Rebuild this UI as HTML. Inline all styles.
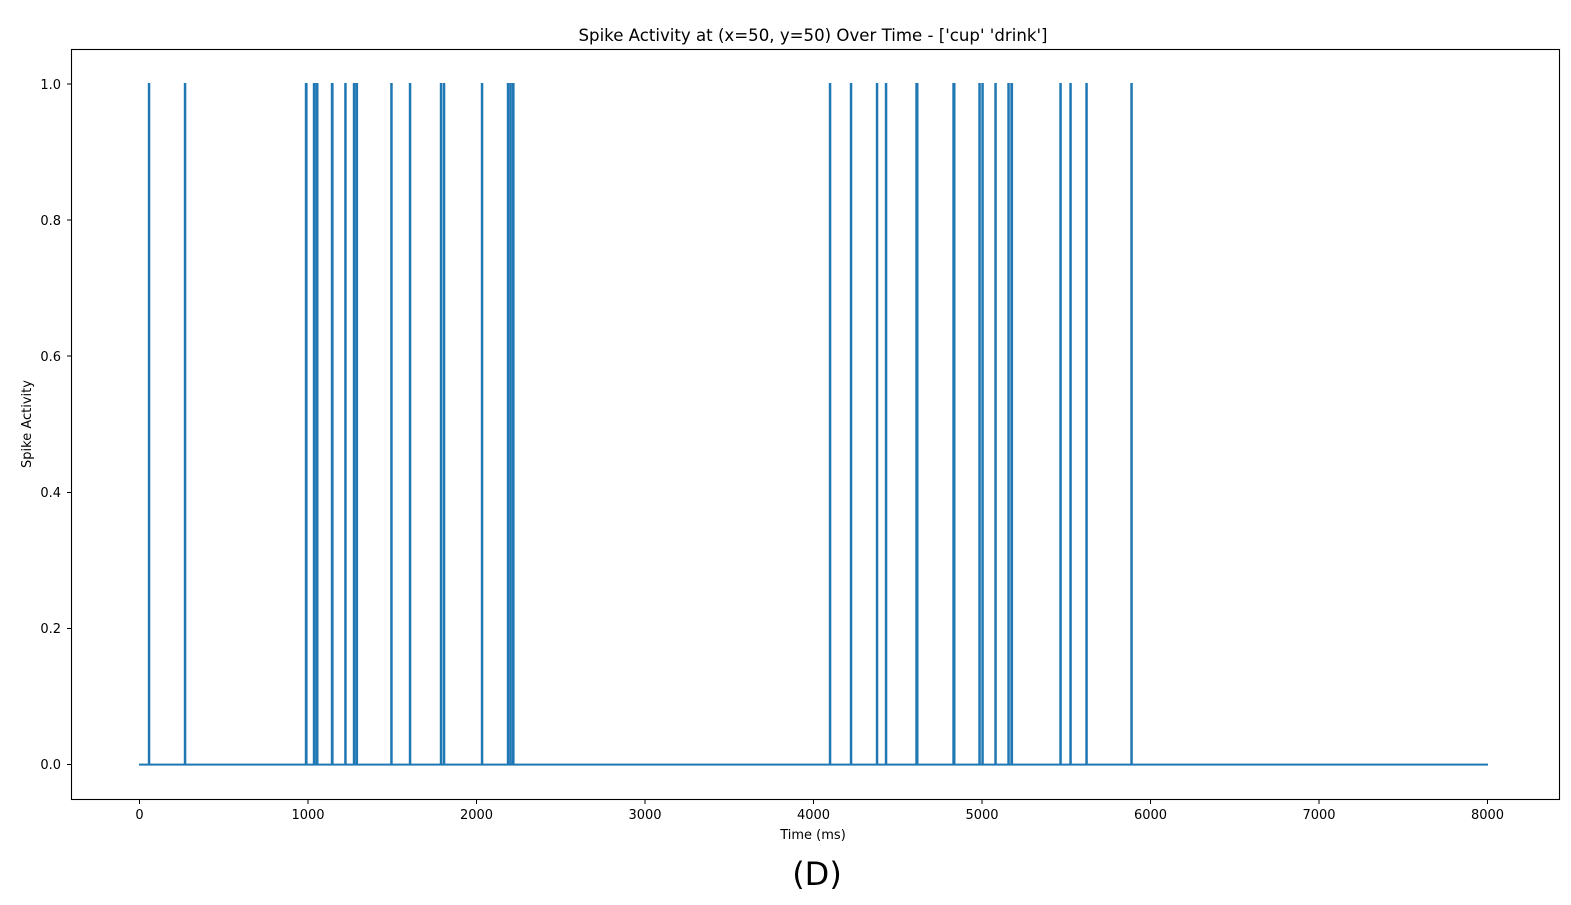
<!DOCTYPE html><html><head><meta charset="utf-8"><style>
html,body{margin:0;padding:0;background:#fff;width:1571px;height:905px;overflow:hidden}
svg text{font-family:"DejaVu Sans","Liberation Sans",sans-serif;fill:#000}
</style></head><body>
<svg width="1571" height="905" xmlns="http://www.w3.org/2000/svg">
<text x="813" y="41" font-size="16.6" text-anchor="middle">Spike Activity at (x=50, y=50) Over Time - ['cup' 'drink']</text>
<g fill="#1f77b4">
<rect x="139" y="763.6" width="1349" height="2"/>
<rect x="147.8" y="83" width="2.5" height="682"/>
<rect x="183.8" y="83" width="2.5" height="682"/>
<rect x="304.8" y="83" width="2.8" height="682"/>
<rect x="312.8" y="83" width="2.5" height="682"/>
<rect x="315.3" y="83" width="3.2" height="682"/>
<rect x="330.8" y="83" width="2.8" height="682"/>
<rect x="344.2" y="83" width="2.5" height="682"/>
<rect x="352.8" y="83" width="2.5" height="682"/>
<rect x="355.3" y="83" width="2.8" height="682"/>
<rect x="390.2" y="83" width="2.5" height="682"/>
<rect x="408.8" y="83" width="2.5" height="682"/>
<rect x="439.8" y="83" width="2.5" height="682"/>
<rect x="442.8" y="83" width="2.5" height="682"/>
<rect x="480.8" y="83" width="2.5" height="682"/>
<rect x="506.8" y="83" width="2.5" height="682"/>
<rect x="509.3" y="83" width="2.5" height="682"/>
<rect x="511.8" y="83" width="2.8" height="682"/>
<rect x="828.8" y="83" width="2.5" height="682"/>
<rect x="849.8" y="83" width="2.5" height="682"/>
<rect x="875.8" y="83" width="2.5" height="682"/>
<rect x="884.8" y="83" width="2.5" height="682"/>
<rect x="915.3" y="83" width="3.2" height="682"/>
<rect x="952.3" y="83" width="3.2" height="682"/>
<rect x="978.3" y="83" width="2.5" height="682"/>
<rect x="981.3" y="83" width="2.5" height="682"/>
<rect x="994.3" y="83" width="2.5" height="682"/>
<rect x="1007.3" y="83" width="2.5" height="682"/>
<rect x="1010.3" y="83" width="2.8" height="682"/>
<rect x="1059.3" y="83" width="2.5" height="682"/>
<rect x="1069.3" y="83" width="2.5" height="682"/>
<rect x="1085.3" y="83" width="2.5" height="682"/>
<rect x="1130.3" y="83" width="2.5" height="682"/>
</g>
<rect x="71.5" y="49.5" width="1488" height="750" fill="none" stroke="#000" stroke-width="1.1"/>
<g stroke="#000" stroke-width="1">
<line x1="67" y1="764.5" x2="71" y2="764.5"/><line x1="67" y1="628.5" x2="71" y2="628.5"/>
<line x1="67" y1="492.5" x2="71" y2="492.5"/><line x1="67" y1="356" x2="71" y2="356"/>
<line x1="67" y1="220" x2="71" y2="220"/><line x1="67" y1="84" x2="71" y2="84"/>
<line x1="139.5" y1="800" x2="139.5" y2="804"/><line x1="308" y1="800" x2="308" y2="804"/>
<line x1="476.5" y1="800" x2="476.5" y2="804"/><line x1="645" y1="800" x2="645" y2="804"/>
<line x1="813.5" y1="800" x2="813.5" y2="804"/><line x1="982" y1="800" x2="982" y2="804"/>
<line x1="1150.5" y1="800" x2="1150.5" y2="804"/><line x1="1319" y1="800" x2="1319" y2="804"/>
<line x1="1487.5" y1="800" x2="1487.5" y2="804"/>
</g>
<g font-size="13" text-anchor="end">
<text x="61" y="769">0.0</text><text x="61" y="633">0.2</text><text x="61" y="497">0.4</text>
<text x="61" y="361">0.6</text><text x="61" y="225">0.8</text><text x="61" y="89">1.0</text>
</g>
<g font-size="13" text-anchor="middle">
<text x="139.5" y="819">0</text><text x="308" y="819">1000</text><text x="476.5" y="819">2000</text>
<text x="645" y="819">3000</text><text x="813.5" y="819">4000</text><text x="982" y="819">5000</text>
<text x="1150.5" y="819">6000</text><text x="1319" y="819">7000</text><text x="1487.5" y="819">8000</text>
<text x="813" y="839">Time (ms)</text>
</g>
<text transform="translate(31,424) rotate(-90)" font-size="13" text-anchor="middle">Spike Activity</text>
<text x="817" y="885" font-size="32" text-anchor="middle">(D)</text>
</svg>
</body></html>
